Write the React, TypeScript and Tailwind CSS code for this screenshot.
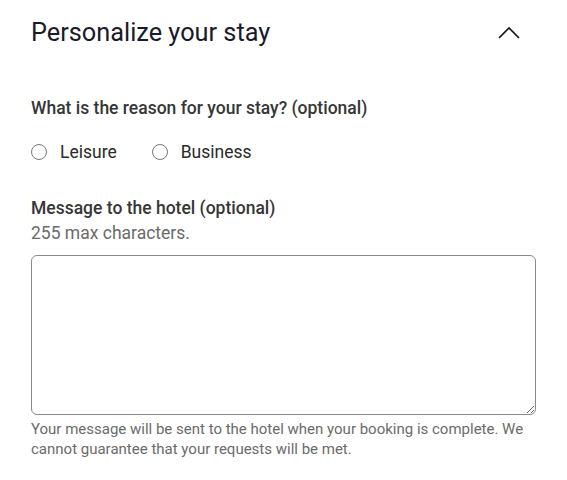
import React from "react";

export default function App() {
  return (
    <div className="w-[567px] h-[480px] bg-white px-[31px] font-['Roboto',sans-serif]">
      <div className="flex items-center justify-between pt-[16px] h-[66px] pb-[16px]">
        <h2 className="text-[25.3px] leading-[34px] text-[#1a1a2a] font-normal">Personalize your stay</h2>
        <button className="w-[24px] h-[24px] mr-[15px] flex items-center justify-center text-[#111]">
          <svg width="24" height="24" viewBox="0 0 24 24" fill="none" stroke="currentColor" strokeWidth="1.6">
            <path d="M2 17 L12 7 L22 17" />
          </svg>
        </button>
      </div>

      <div className="mt-[30px] text-[17.5px] leading-[24px] font-medium text-[#363636]">
        What is the reason for your stay? (optional)
      </div>

      <div className="flex items-center gap-[35px] mt-[20px] text-[17.5px] leading-[24px] text-[#2a2a2a]">
        <label className="flex items-center gap-[13px]">
          <span className="w-[16px] h-[16px] rounded-full border border-[#777] bg-white" />
          Leisure
        </label>
        <label className="flex items-center gap-[13px]">
          <span className="w-[16px] h-[16px] rounded-full border border-[#777] bg-white" />
          Business
        </label>
      </div>

      <div className="mt-[32px] text-[17.5px] leading-[24px] font-medium text-[#363636]">
        Message to the hotel (optional)
      </div>
      <div className="mt-[1px] text-[17.5px] leading-[24px] text-[#6b6b6b]">255 max characters.</div>

      <textarea className="block mt-[10px] w-full h-[160px] rounded-[6px] border border-[#8a8a8a] outline-none resize-y" />

      <p className="mt-[4px] text-[15px] leading-[20px] text-[#6b6b6b]">
        Your message will be sent to the hotel when your booking is complete. We cannot guarantee that your requests will be met.
      </p>
    </div>
  );
}
